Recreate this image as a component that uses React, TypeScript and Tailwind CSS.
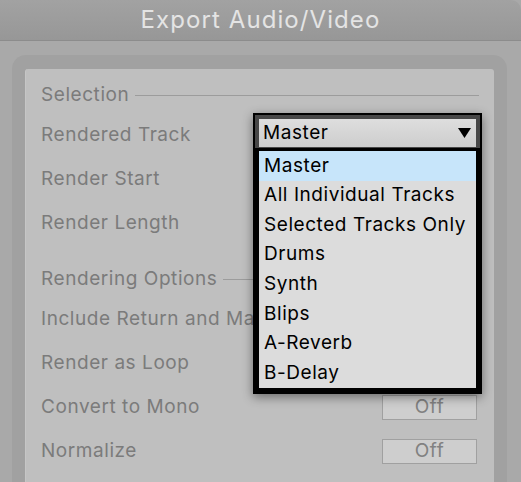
const FONT = "font-['Inter','Liberation_Sans',sans-serif] tracking-[0.035em]";

const TRACKS = [
  "Master",
  "All Individual Tracks",
  "Selected Tracks Only",
  "Drums",
  "Synth",
  "Blips",
  "A-Reverb",
  "B-Delay",
];

function SectionHeader({ label }: { label: string }) {
  return (
    <div className="flex h-[36px] items-center gap-[6px]">
      <span className="text-[19px] text-[#7b7b7b]">{label}</span>
      <div className="h-px flex-1 bg-[#9c9c9c]" />
    </div>
  );
}

function Row({ label, value }: { label: string; value?: string }) {
  return (
    <div className="flex h-[44px] items-center justify-between">
      <span className="whitespace-nowrap text-[19px] text-[#7b7b7b]">{label}</span>
      {value && (
        <div className="mr-[2px] flex h-[25px] w-[95px] items-center justify-center border border-[#a0a0a0] bg-[#cecece] text-[19px] text-[#818181]">
          {value}
        </div>
      )}
    </div>
  );
}

function TrackDropdown() {
  return (
    <div className="absolute left-[253px] top-[113px] w-[229px] border-2 border-black bg-black shadow-[0_3px_10px_rgba(0,0,0,0.45)]">
      <div className="bg-[#474747] px-[4px] pb-[1px] pt-[4px]">
        <div className="flex h-[28px] items-center justify-between bg-gradient-to-b from-[#dedede] to-[#cdcdcd] pl-[4px] pr-[5px]">
          <span className="text-[19px] text-black">Master</span>
          <svg width="13" height="10" viewBox="0 0 13 10">
            <path d="M0 0 H13 L6.5 10 Z" fill="#000" />
          </svg>
        </div>
      </div>
      <div className="h-[2px] bg-black" />
      <div className="px-[3px] pb-[3px]">
        <div className="border border-[#000] bg-[#dcdcdc]">
          {TRACKS.map((t, i) => (
            <div
              key={t}
              className={
                "flex h-[29.6px] items-center px-[5px] text-[19px] text-black " +
                (i === 0 ? "bg-[#c7e5fa]" : "")
              }
            >
              {t}
            </div>
          ))}
        </div>
      </div>
    </div>
  );
}

export default function App() {
  return (
    <div className={`relative h-[482px] w-[521px] overflow-hidden bg-[#a9a9a9] ${FONT}`}>
      {/* title bar */}
      <div className="flex h-[41px] items-center justify-center rounded-tr-[10px] border-b border-[#8c8c8c] bg-gradient-to-b from-[#a2a2a2] to-[#979797]">
        <span className="text-[24px] tracking-[0.045em] text-[#e4e4e4]">Export Audio/Video</span>
      </div>

      <div className="pl-[12px] pr-[14px] pt-[14px]">
        <div className="rounded-[14px] bg-[#a1a1a1] px-[13px] pt-[14px]">
          <div className="h-[460px] rounded-t-[3px] border-l border-[#c6c6c6] bg-[#bfbfbf] pl-[15px] pr-[15px] pt-[8px]">
            <SectionHeader label="Selection" />
            <Row label="Rendered Track" />
            <Row label="Render Start" />
            <Row label="Render Length" />
            <div className="h-[16px]" />
            <SectionHeader label="Rendering Options" />
            <Row label="Include Return and Master Effects" value="On" />
            <Row label="Render as Loop" value="Off" />
            <Row label="Convert to Mono" value="Off" />
            <Row label="Normalize" value="Off" />
            <div className="flex h-[44px] items-center justify-end">
              <div className="mr-[2px] h-[25px] w-[95px] border border-[#a0a0a0] bg-[#cecece]" />
            </div>
          </div>
        </div>
      </div>

      <TrackDropdown />
    </div>
  );
}
